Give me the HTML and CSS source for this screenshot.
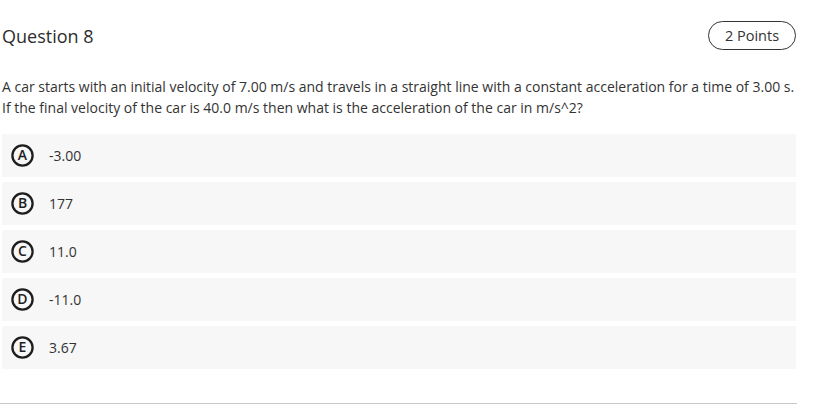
FILE: index.html
```html
<!DOCTYPE html>
<html>
<head>
<meta charset="utf-8">
<link rel="stylesheet" href="styles.css">
</head>
<body>
<div class="question">
  <div class="header">
    <h2 class="title">Question 8</h2>
    <span class="points">2 Points</span>
  </div>
  <p class="prompt">A car starts with an initial velocity of 7.00 m/s and travels in a straight line with a constant acceleration for a time of 3.00 s. If the final velocity of the car is 40.0 m/s then what is the acceleration of the car in m/s^2?</p>
  <div class="options">
    <div class="option"><svg class="letter" width="23" height="23" viewBox="0 0 23 23"><circle cx="11.5" cy="11.5" r="10.1" fill="none" stroke="#1e1e1e" stroke-width="2.3"/><text x="11.5" y="16.4" text-anchor="middle">A</text></svg><span class="value">-3.00</span></div>
    <div class="option"><svg class="letter" width="23" height="23" viewBox="0 0 23 23"><circle cx="11.5" cy="11.5" r="10.1" fill="none" stroke="#1e1e1e" stroke-width="2.3"/><text x="11.5" y="16.4" text-anchor="middle">B</text></svg><span class="value">177</span></div>
    <div class="option"><svg class="letter" width="23" height="23" viewBox="0 0 23 23"><circle cx="11.5" cy="11.5" r="10.1" fill="none" stroke="#1e1e1e" stroke-width="2.3"/><text x="11.5" y="16.4" text-anchor="middle">C</text></svg><span class="value">11.0</span></div>
    <div class="option"><svg class="letter" width="23" height="23" viewBox="0 0 23 23"><circle cx="11.5" cy="11.5" r="10.1" fill="none" stroke="#1e1e1e" stroke-width="2.3"/><text x="11.5" y="16.4" text-anchor="middle">D</text></svg><span class="value">-11.0</span></div>
    <div class="option"><svg class="letter" width="23" height="23" viewBox="0 0 23 23"><circle cx="11.5" cy="11.5" r="10.1" fill="none" stroke="#1e1e1e" stroke-width="2.3"/><text x="11.5" y="16.4" text-anchor="middle">E</text></svg><span class="value">3.67</span></div>
  </div>
  <div class="divider"></div>
</div>
</body>
</html>
```
FILE: styles.css
```css
html, body {
  margin: 0;
  padding: 0;
  background: #fff;
}
body {
  font-family: "Open Sans", "Noto Sans", sans-serif;
  color: #333;
}
.question {
  width: 797px;
  padding-top: 21px;
}
.header {
  display: flex;
  justify-content: space-between;
  align-items: center;
  padding-left: 2px;
  height: 29px;
}
.title {
  margin: 0;
  font-size: 18px;
  font-weight: 400;
  color: #2d2d2d;
}
.points {
  box-sizing: border-box;
  height: 29px;
  width: 88px;
  border: 1px solid #333;
  border-radius: 15px;
  display: flex;
  align-items: center;
  justify-content: center;
  font-size: 14.5px;
  color: #333;
  margin-right: 1px;
}
.prompt {
  margin: 26px 0 0 2px;
  width: 795px;
  font-size: 14px;
  line-height: 21px;
  color: #333;
}
.options {
  margin-top: 16px;
  display: flex;
  flex-direction: column;
  gap: 5px;
  padding-left: 2px;
}
.option {
  height: 43px;
  width: 794px;
  background: #f7f7f7;
  display: flex;
  align-items: center;
  padding-left: 9px;
  box-sizing: border-box;
}
.letter {
  flex: none;
  display: block;
  font-family: "Open Sans", "Noto Sans", sans-serif;
  font-size: 14px;
  font-weight: 600;
  fill: #1e1e1e;
}
.value {
  margin-left: 15px;
  font-size: 14px;
  color: #333;
}
.divider {
  margin-top: 34px;
  height: 1px;
  background: #c8c8c8;
  width: 797px;
}
```
